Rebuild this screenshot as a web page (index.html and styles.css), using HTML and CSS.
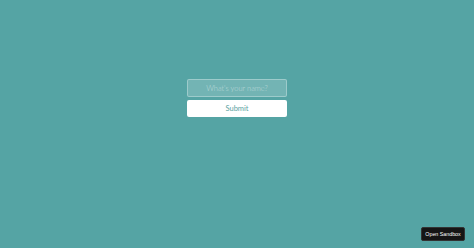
FILE: index.html
```html
<!DOCTYPE html>
<html>
<head>
<meta charset="utf-8">
<link rel="stylesheet" href="styles.css">
</head>
<body>
<main class="page">
  <form class="form">
    <input class="name" type="text" placeholder="What's your name?">
    <button class="submit" type="button">Submit</button>
  </form>
  <div class="footer"><a class="sandbox">Open Sandbox</a></div>
</main>
</body>
</html>
```
FILE: styles.css
```css
html, body { margin: 0; padding: 0; }
body {
  background: #55a4a4;
  font-family: Lato, "Liberation Sans", sans-serif;
  width: 474px;
  height: 248px;
  overflow: hidden;
}
.page {
  height: 248px;
  display: flex;
  flex-direction: column;
  box-sizing: border-box;
  padding-top: 79px;
}
.form {
  display: flex;
  flex-direction: column;
  align-items: center;
  gap: 3px;
  margin: 0;
}
.name {
  box-sizing: border-box;
  width: 100px;
  height: 18px;
  margin: 0;
  padding: 0 4px;
  background: rgba(255,255,255,0.18);
  border: 1px solid rgba(255,255,255,0.3);
  border-radius: 2px;
  font-family: inherit;
  font-size: 7.5px;
  font-weight: 300;
  color: #fff;
  text-align: center;
  outline: none;
}
.name::placeholder { color: rgba(255,255,255,0.5); }
.submit {
  box-sizing: border-box;
  width: 100px;
  height: 17px;
  margin: 0;
  padding: 0;
  background: #fff;
  border: none;
  border-radius: 2px;
  font-family: inherit;
  font-size: 7.5px;
  font-weight: 400;
  color: #5aa3a3;
}
.footer {
  margin-top: auto;
  display: flex;
  justify-content: flex-end;
  padding: 0 9px 7px 0;
}
.sandbox {
  box-sizing: border-box;
  background: #151515;
  color: #fff;
  font-family: "Liberation Sans", sans-serif;
  font-size: 5.3px;
  line-height: 12px;
  border: 1px solid #333;
  border-radius: 2px;
  width: 44px;
  height: 14px;
  text-align: center;
  white-space: nowrap;
}
```
